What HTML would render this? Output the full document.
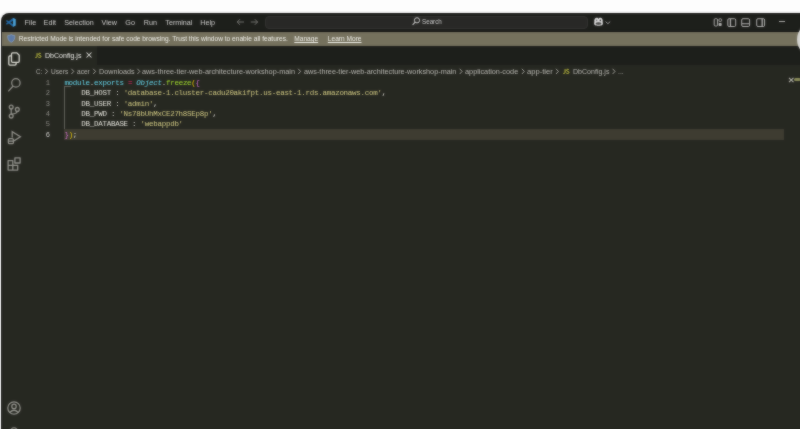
<!DOCTYPE html>
<html><head><meta charset="utf-8">
<style>
html,body{margin:0;padding:0}
body{width:800px;height:429px;overflow:hidden;position:relative;background:#fdfdfd;font-family:"Liberation Sans",sans-serif}
#wrap{position:absolute;left:0;top:0;width:800px;height:429px;will-change:transform}
#wrap2{position:absolute;left:0;top:0;width:800px;height:429px;filter:blur(1px);opacity:0.55}
.a{position:absolute}
.t{white-space:nowrap;line-height:1}
.code{font-family:"Liberation Mono",monospace;font-size:7.5px;letter-spacing:-0.27px;white-space:pre;line-height:10.35px;color:#e6e6de}
.ln{font-family:"Liberation Mono",monospace;font-size:7.05px;line-height:10.35px;color:#90908a;text-align:right;width:20px}
svg{position:absolute;overflow:visible}
</style></head><body><div id="wrap">
<div class="a" style="left:-20px;top:-20px;width:840px;height:470px;background:#fdfdfd"></div>
<div class="a" style="left:1px;top:12.6px;width:830px;height:440px;background:#121211;border-top-left-radius:8px"></div>
<div class="a" style="left:1.6px;top:14.1px;width:830px;height:17.4px;background:#1e1f1c;border-top-left-radius:7px"></div>
<div class="a" style="left:2px;top:31.5px;width:830px;height:14px;background:#75715e"></div>
<div class="a" style="left:2px;top:45.5px;width:830px;height:19.5px;background:#1e1f1c"></div>
<div class="a" style="left:2px;top:65px;width:830px;height:400px;background:#272822"></div>
<div class="a" style="left:2px;top:45.5px;width:95px;height:20px;background:#272822"></div>
<svg style="left:5.8px;top:17.8px" width="9.6" height="8.8" viewBox="0 0 24 24" preserveAspectRatio="none"><path fill="#2068a6" d="M23.15 2.587L18.21.21a1.494 1.494 0 0 0-1.705.29l-9.46 8.63-4.12-3.128a.999.999 0 0 0-1.276.057L.327 7.261A1 1 0 0 0 .326 8.74L3.899 12 .326 15.26a1 1 0 0 0 .001 1.479L1.65 17.94a.999.999 0 0 0 1.276.057l4.12-3.128 9.46 8.63a1.492 1.492 0 0 0 1.704.29l4.942-2.377A1.5 1.5 0 0 0 24 20.06V3.939a1.5 1.5 0 0 0-.85-1.352zm-5.146 14.861L10.826 12l7.178-5.448v10.896z"/><path fill="#4ea6da" d="M18 0.3L23.2 2.6A1.5 1.5 0 0 1 24 3.9V20.1A1.5 1.5 0 0 1 23.2 21.4L18 23.8Z"/></svg>
<div class="a t" style="left:24.6px;top:18.6px;font-size:7.2px;color:#d4d4d2;">File</div>
<div class="a t" style="left:43.6px;top:18.6px;font-size:7.2px;color:#d4d4d2;">Edit</div>
<div class="a t" style="left:64.3px;top:18.6px;font-size:7.2px;color:#d4d4d2;">Selection</div>
<div class="a t" style="left:101.6px;top:18.6px;font-size:7.2px;color:#d4d4d2;">View</div>
<div class="a t" style="left:125.3px;top:18.6px;font-size:7.2px;color:#d4d4d2;">Go</div>
<div class="a t" style="left:143.8px;top:18.6px;font-size:7.2px;color:#d4d4d2;">Run</div>
<div class="a t" style="left:165.3px;top:18.6px;font-size:7.2px;color:#d4d4d2;">Terminal</div>
<div class="a t" style="left:200.3px;top:18.6px;font-size:7.2px;color:#d4d4d2;">Help</div>
<svg style="left:235.5px;top:18px" width="9" height="8" viewBox="0 0 9 8"><path d="M8 4H1.2M4 1.2L1.2 4 4 6.8" fill="none" stroke="#7e7e7b" stroke-width="0.9"/></svg>
<svg style="left:249.5px;top:18px" width="9" height="8" viewBox="0 0 9 8"><path d="M0.8 4H7.6M4.8 1.2L7.6 4 4.8 6.8" fill="none" stroke="#7e7e7b" stroke-width="0.9"/></svg>
<div class="a" style="left:265px;top:15.5px;width:321px;height:11.5px;border:1px solid #343432;background:#292927;border-radius:4px"></div>
<svg style="left:411px;top:16px" width="10" height="10" viewBox="0 0 10 10"><circle cx="6" cy="4.3" r="2.6" fill="none" stroke="#cfcfcf" stroke-width="1"/><path d="M4.2 6.1L1.6 8.9" stroke="#cfcfcf" stroke-width="1.1"/></svg>
<div class="a t" style="left:422.3px;top:18.3px;font-size:7.0px;color:#d0d0d0;transform:scaleX(0.8927);transform-origin:0 0;">Search</div>
<svg style="left:593px;top:17.2px" width="11" height="9.5" viewBox="0 0 11 10"><path d="M1.2 5.2C0.6 3.8 1.3 1 3.2 0.8 4.5 0.7 5.2 1.3 5.5 2 5.8 1.3 6.5 0.7 7.8 0.8 9.7 1 10.4 3.8 9.8 5.2 10.4 6 10.3 8 9 8.8 7.8 9.5 3.2 9.5 2 8.8 0.7 8 0.6 6 1.2 5.2Z" fill="#dedede"/><ellipse cx="5.5" cy="6.9" rx="3.1" ry="1.3" fill="#444442"/><ellipse cx="3.6" cy="3.6" rx="0.8" ry="1" fill="#777"/><ellipse cx="7.4" cy="3.6" rx="0.8" ry="1" fill="#333"/></svg>
<svg style="left:605px;top:20.5px" width="6" height="4" viewBox="0 0 6 4"><path d="M0.6 0.6L2.9 2.7 5.2 0.6" fill="none" stroke="#b0b0b0" stroke-width="0.9"/></svg>
<svg style="left:713px;top:18px" width="10" height="9" viewBox="0 0 10 9"><rect x="1.2" y="0.7" width="3.4" height="7.3" rx="1.1" fill="none" stroke="#b4b4b2" stroke-width="1"/><rect x="5.9" y="0.8" width="2.7" height="2.6" rx="0.8" fill="none" stroke="#b4b4b2" stroke-width="0.9"/><rect x="5.6" y="5" width="3.1" height="3" rx="0.9" fill="#b4b4b2"/></svg>
<svg style="left:727.3px;top:17.5px" width="10" height="9" viewBox="0 0 10 9"><rect x="0.8" y="0.7" width="7.9" height="7.8" rx="1.3" fill="none" stroke="#b4b4b2" stroke-width="1"/><rect x="2.8" y="1" width="1.3" height="7.2" fill="#b4b4b2"/></svg>
<svg style="left:741.4px;top:17.5px" width="10" height="9" viewBox="0 0 10 9"><rect x="0.7" y="0.7" width="7.9" height="7.8" rx="1.3" fill="none" stroke="#b4b4b2" stroke-width="1"/><rect x="1" y="5.2" width="7.3" height="1" fill="#b4b4b2"/></svg>
<svg style="left:755.6px;top:17.5px" width="10" height="9" viewBox="0 0 10 9"><rect x="0.7" y="0.7" width="7.9" height="7.8" rx="1.3" fill="none" stroke="#b4b4b2" stroke-width="1"/><rect x="5.5" y="1" width="1.3" height="7.2" fill="#b4b4b2"/></svg>
<div class="a" style="left:778.6px;top:21px;width:6.3px;height:0.9px;background:#b4b4b2"></div>
<div class="a" style="left:797.1px;top:21.5px;width:35px;height:35px;border-radius:50%;background:#d6d6d2"></div>
<svg style="left:7.3px;top:34.4px" width="8.5" height="8.8" viewBox="0 0 9 9"><path d="M4.5 0.5C5.8 1.3 7 1.6 8.3 1.6 8.4 5 7.2 7.6 4.5 8.6 1.8 7.6 0.6 5 0.7 1.6 2 1.6 3.2 1.3 4.5 0.5Z" fill="#5d7ba6" stroke="#8aa2c8" stroke-width="0.7"/></svg>
<div class="a t" style="left:18.8px;top:36.2px;font-size:6.6px;color:#f4f4ee;">Restricted Mode is intended for safe code browsing. Trust this window to enable all features.</div>
<div class="a t" style="left:294.3px;top:36.2px;font-size:6.6px;color:#f4f4ee;text-decoration:underline">Manage</div>
<div class="a t" style="left:327.8px;top:36.2px;font-size:6.6px;color:#f4f4ee;text-decoration:underline">Learn More</div>
<svg style="left:0;top:0" width="28" height="429" viewBox="0 0 28 429">
 <g fill="none" stroke="#e2e2da" stroke-width="1.3" stroke-linejoin="round">
  <path d="M11.4 55.8H9.9Q8.8 55.8 8.8 56.9V64Q8.8 65.1 9.9 65.1H15Q16.1 65.1 16.1 64V62.4"/>
  <path d="M12.6 52.9H16.9L19.2 55.3V61.2Q19.2 62.3 18.1 62.3H12.6Q11.5 62.3 11.5 61.2V54Q11.5 52.9 12.6 52.9Z"/>
 </g>
 <g fill="none" stroke="#94948e" stroke-width="1.3" stroke-linecap="round">
  <circle cx="15.9" cy="82.9" r="4.2"/>
  <path d="M12.9 86.2L8.7 90.9"/>
  <circle cx="11.2" cy="107.1" r="1.9"/>
  <circle cx="11.2" cy="116.1" r="1.9"/>
  <circle cx="17.3" cy="109.4" r="1.9"/>
  <path d="M11.2 109V114.2M17.3 111.3Q17.3 113.7 11.6 114.1"/>
  <path d="M12.2 137V131.6L20.4 136.8L14.3 140.6"/>
  <rect x="8.4" y="138.6" width="5" height="5" rx="1.2"/>
  <path d="M8.6 141.1H13.2"/>
  <path d="M8.1 160.6H12.8V170.1H8.1ZM8.1 165.3H17.7V170.1H12.8M14.9 157.8H20.1V163H14.9Z" stroke-linejoin="round"/>
  <circle cx="14" cy="408" r="6.2"/>
  <circle cx="14" cy="406.4" r="2.2"/>
  <path d="M10 412.3Q14 408.2 18 412.3"/>
  <circle cx="14" cy="431.5" r="3.6"/>
 </g>
</svg>
<svg style="left:35px;top:52.8px" width="6.4" height="4.8" viewBox="0 0 13 10"><path d="M4.2 0.3V7Q4.2 9.2 2 9.2H0.4M12.2 1.4Q11.1 0.6 9.6 0.6Q7.3 0.6 7.3 2.6Q7.3 4.2 9.7 4.8Q12.3 5.4 12.3 7.2Q12.3 9.3 9.6 9.3Q7.8 9.3 6.6 8.4" fill="none" stroke="#cbcb41" stroke-width="2"/></svg>
<div class="a t" style="left:44.8px;top:52.0px;font-size:7.2px;color:#f2f2ee;transform:scaleX(0.9798);transform-origin:0 0;">DbConfig.js</div>
<svg style="left:85.9px;top:52.2px" width="6" height="6" viewBox="0 0 6 6"><path d="M0.5 0.5L5.5 5.5M5.5 0.5L0.5 5.5" stroke="#e2e2de" stroke-width="1.05"/></svg>
<div class="a t" style="left:35.8px;top:68.2px;font-size:7.3px;color:#bcbcb6;transform:scaleX(0.8497);transform-origin:0 0;">C:</div>
<div class="a t" style="left:50.8px;top:68.2px;font-size:7.3px;color:#bcbcb6;transform:scaleX(0.9027);transform-origin:0 0;">Users</div>
<div class="a t" style="left:76.6px;top:68.2px;font-size:7.3px;color:#bcbcb6;transform:scaleX(0.9017);transform-origin:0 0;">acer</div>
<div class="a t" style="left:98.8px;top:68.2px;font-size:7.3px;color:#bcbcb6;transform:scaleX(0.9862);transform-origin:0 0;">Downloads</div>
<div class="a t" style="left:142.2px;top:68.2px;font-size:7.3px;color:#bcbcb6;transform:scaleX(1.0008);transform-origin:0 0;">aws-three-tier-web-architecture-workshop-main</div>
<div class="a t" style="left:303.8px;top:68.2px;font-size:7.3px;color:#bcbcb6;transform:scaleX(0.9969);transform-origin:0 0;">aws-three-tier-web-architecture-workshop-main</div>
<div class="a t" style="left:465.3px;top:68.2px;font-size:7.3px;color:#bcbcb6;transform:scaleX(1.0011);transform-origin:0 0;">application-code</div>
<div class="a t" style="left:526.8px;top:68.2px;font-size:7.3px;color:#bcbcb6;transform:scaleX(1.0428);transform-origin:0 0;">app-tier</div>
<div class="a t" style="left:572.8px;top:68.2px;font-size:7.3px;color:#bcbcb6;transform:scaleX(0.9651);transform-origin:0 0;">DbConfig.js</div>
<div class="a t" style="left:617.6px;top:68.2px;font-size:7.3px;color:#bcbcb6;transform:scaleX(0.9536);transform-origin:0 0;">...</div>
<svg style="left:0;top:0" width="800" height="100" viewBox="0 0 800 100"><g fill="none" stroke="#bcbcb6" stroke-width="0.85"><path d="M45.2 68.8L47.6 71.4 45.2 74"/><path d="M71.4 68.8L73.80000000000001 71.4 71.4 74"/><path d="M93.2 68.8L95.60000000000001 71.4 93.2 74"/><path d="M137.4 68.8L139.8 71.4 137.4 74"/><path d="M298.2 68.8L300.59999999999997 71.4 298.2 74"/><path d="M459.7 68.8L462.09999999999997 71.4 459.7 74"/><path d="M521.9 68.8L524.3 71.4 521.9 74"/><path d="M556 68.8L558.4 71.4 556 74"/><path d="M612.6 68.8L615.0 71.4 612.6 74"/></g></svg>
<svg style="left:563.3px;top:69.3px" width="6.4" height="4.8" viewBox="0 0 13 10"><path d="M4.2 0.3V7Q4.2 9.2 2 9.2H0.4M12.2 1.4Q11.1 0.6 9.6 0.6Q7.3 0.6 7.3 2.6Q7.3 4.2 9.7 4.8Q12.3 5.4 12.3 7.2Q12.3 9.3 9.6 9.3Q7.8 9.3 6.6 8.4" fill="none" stroke="#cbcb41" stroke-width="2"/></svg>
<div class="a" style="left:64px;top:129px;width:720.3px;height:10.7px;background:#3e3d32"></div>
<div class="a" style="left:64.2px;top:86.2px;width:0.9px;height:42.5px;background:#64645e"></div>
<div class="a" style="left:64.2px;top:86.2px;width:6.5px;height:0.8px;background:#64645e"></div>
<div class="a ln" style="left:30px;top:78px">1<br>2<br>3<br>4<br>5<br><span style="color:#d6d6d2">6</span></div>
<div class="a code" style="left:64.4px;top:78px"><span style="color:#66d9ef">module</span>.<span style="color:#66d9ef">exports</span> <span style="color:#f92672">=</span> <span style="color:#66d9ef;font-style:italic">Object</span>.<span style="color:#a6e22e">freeze</span><span style="color:#ffd700">(</span><span style="color:#da70d6">{</span>
    DB_HOST : <span style="color:#d6cf86">'database-1.cluster-cadu20akifpt.us-east-1.rds.amazonaws.com'</span>,
    DB_USER : <span style="color:#d6cf86">'admin'</span>,
    DB_PWD : <span style="color:#d6cf86">'Ns78bUhMxCE27h8SEp8p'</span>,
    DB_DATABASE : <span style="color:#d6cf86">'webappdb'</span>
<span style="color:#da70d6">}</span><span style="color:#ffd700">)</span>;</div>
<svg style="left:787.5px;top:76.8px" width="7" height="6" viewBox="0 0 7 6"><path d="M1 0.8L5.5 5.2M5.5 0.8L1 5.2" stroke="#b8b8b0" stroke-width="1.1"/></svg>
<div class="a" style="left:794px;top:77.8px;width:7px;height:3.6px;background:#8a8c5a;border-radius:2px"></div>
</div><div id="wrap2">
<div class="a" style="left:-20px;top:-20px;width:840px;height:470px;background:#fdfdfd"></div>
<div class="a" style="left:1px;top:12.6px;width:830px;height:440px;background:#121211;border-top-left-radius:8px"></div>
<div class="a" style="left:1.6px;top:14.1px;width:830px;height:17.4px;background:#1e1f1c;border-top-left-radius:7px"></div>
<div class="a" style="left:2px;top:31.5px;width:830px;height:14px;background:#75715e"></div>
<div class="a" style="left:2px;top:45.5px;width:830px;height:19.5px;background:#1e1f1c"></div>
<div class="a" style="left:2px;top:65px;width:830px;height:400px;background:#272822"></div>
<div class="a" style="left:2px;top:45.5px;width:95px;height:20px;background:#272822"></div>
<svg style="left:5.8px;top:17.8px" width="9.6" height="8.8" viewBox="0 0 24 24" preserveAspectRatio="none"><path fill="#2068a6" d="M23.15 2.587L18.21.21a1.494 1.494 0 0 0-1.705.29l-9.46 8.63-4.12-3.128a.999.999 0 0 0-1.276.057L.327 7.261A1 1 0 0 0 .326 8.74L3.899 12 .326 15.26a1 1 0 0 0 .001 1.479L1.65 17.94a.999.999 0 0 0 1.276.057l4.12-3.128 9.46 8.63a1.492 1.492 0 0 0 1.704.29l4.942-2.377A1.5 1.5 0 0 0 24 20.06V3.939a1.5 1.5 0 0 0-.85-1.352zm-5.146 14.861L10.826 12l7.178-5.448v10.896z"/><path fill="#4ea6da" d="M18 0.3L23.2 2.6A1.5 1.5 0 0 1 24 3.9V20.1A1.5 1.5 0 0 1 23.2 21.4L18 23.8Z"/></svg>
<div class="a t" style="left:24.6px;top:18.6px;font-size:7.2px;color:#d4d4d2;">File</div>
<div class="a t" style="left:43.6px;top:18.6px;font-size:7.2px;color:#d4d4d2;">Edit</div>
<div class="a t" style="left:64.3px;top:18.6px;font-size:7.2px;color:#d4d4d2;">Selection</div>
<div class="a t" style="left:101.6px;top:18.6px;font-size:7.2px;color:#d4d4d2;">View</div>
<div class="a t" style="left:125.3px;top:18.6px;font-size:7.2px;color:#d4d4d2;">Go</div>
<div class="a t" style="left:143.8px;top:18.6px;font-size:7.2px;color:#d4d4d2;">Run</div>
<div class="a t" style="left:165.3px;top:18.6px;font-size:7.2px;color:#d4d4d2;">Terminal</div>
<div class="a t" style="left:200.3px;top:18.6px;font-size:7.2px;color:#d4d4d2;">Help</div>
<svg style="left:235.5px;top:18px" width="9" height="8" viewBox="0 0 9 8"><path d="M8 4H1.2M4 1.2L1.2 4 4 6.8" fill="none" stroke="#7e7e7b" stroke-width="0.9"/></svg>
<svg style="left:249.5px;top:18px" width="9" height="8" viewBox="0 0 9 8"><path d="M0.8 4H7.6M4.8 1.2L7.6 4 4.8 6.8" fill="none" stroke="#7e7e7b" stroke-width="0.9"/></svg>
<div class="a" style="left:265px;top:15.5px;width:321px;height:11.5px;border:1px solid #343432;background:#292927;border-radius:4px"></div>
<svg style="left:411px;top:16px" width="10" height="10" viewBox="0 0 10 10"><circle cx="6" cy="4.3" r="2.6" fill="none" stroke="#cfcfcf" stroke-width="1"/><path d="M4.2 6.1L1.6 8.9" stroke="#cfcfcf" stroke-width="1.1"/></svg>
<div class="a t" style="left:422.3px;top:18.3px;font-size:7.0px;color:#d0d0d0;transform:scaleX(0.8927);transform-origin:0 0;">Search</div>
<svg style="left:593px;top:17.2px" width="11" height="9.5" viewBox="0 0 11 10"><path d="M1.2 5.2C0.6 3.8 1.3 1 3.2 0.8 4.5 0.7 5.2 1.3 5.5 2 5.8 1.3 6.5 0.7 7.8 0.8 9.7 1 10.4 3.8 9.8 5.2 10.4 6 10.3 8 9 8.8 7.8 9.5 3.2 9.5 2 8.8 0.7 8 0.6 6 1.2 5.2Z" fill="#dedede"/><ellipse cx="5.5" cy="6.9" rx="3.1" ry="1.3" fill="#444442"/><ellipse cx="3.6" cy="3.6" rx="0.8" ry="1" fill="#777"/><ellipse cx="7.4" cy="3.6" rx="0.8" ry="1" fill="#333"/></svg>
<svg style="left:605px;top:20.5px" width="6" height="4" viewBox="0 0 6 4"><path d="M0.6 0.6L2.9 2.7 5.2 0.6" fill="none" stroke="#b0b0b0" stroke-width="0.9"/></svg>
<svg style="left:713px;top:18px" width="10" height="9" viewBox="0 0 10 9"><rect x="1.2" y="0.7" width="3.4" height="7.3" rx="1.1" fill="none" stroke="#b4b4b2" stroke-width="1"/><rect x="5.9" y="0.8" width="2.7" height="2.6" rx="0.8" fill="none" stroke="#b4b4b2" stroke-width="0.9"/><rect x="5.6" y="5" width="3.1" height="3" rx="0.9" fill="#b4b4b2"/></svg>
<svg style="left:727.3px;top:17.5px" width="10" height="9" viewBox="0 0 10 9"><rect x="0.8" y="0.7" width="7.9" height="7.8" rx="1.3" fill="none" stroke="#b4b4b2" stroke-width="1"/><rect x="2.8" y="1" width="1.3" height="7.2" fill="#b4b4b2"/></svg>
<svg style="left:741.4px;top:17.5px" width="10" height="9" viewBox="0 0 10 9"><rect x="0.7" y="0.7" width="7.9" height="7.8" rx="1.3" fill="none" stroke="#b4b4b2" stroke-width="1"/><rect x="1" y="5.2" width="7.3" height="1" fill="#b4b4b2"/></svg>
<svg style="left:755.6px;top:17.5px" width="10" height="9" viewBox="0 0 10 9"><rect x="0.7" y="0.7" width="7.9" height="7.8" rx="1.3" fill="none" stroke="#b4b4b2" stroke-width="1"/><rect x="5.5" y="1" width="1.3" height="7.2" fill="#b4b4b2"/></svg>
<div class="a" style="left:778.6px;top:21px;width:6.3px;height:0.9px;background:#b4b4b2"></div>
<div class="a" style="left:797.1px;top:21.5px;width:35px;height:35px;border-radius:50%;background:#d6d6d2"></div>
<svg style="left:7.3px;top:34.4px" width="8.5" height="8.8" viewBox="0 0 9 9"><path d="M4.5 0.5C5.8 1.3 7 1.6 8.3 1.6 8.4 5 7.2 7.6 4.5 8.6 1.8 7.6 0.6 5 0.7 1.6 2 1.6 3.2 1.3 4.5 0.5Z" fill="#5d7ba6" stroke="#8aa2c8" stroke-width="0.7"/></svg>
<div class="a t" style="left:18.8px;top:36.2px;font-size:6.6px;color:#f4f4ee;">Restricted Mode is intended for safe code browsing. Trust this window to enable all features.</div>
<div class="a t" style="left:294.3px;top:36.2px;font-size:6.6px;color:#f4f4ee;text-decoration:underline">Manage</div>
<div class="a t" style="left:327.8px;top:36.2px;font-size:6.6px;color:#f4f4ee;text-decoration:underline">Learn More</div>
<svg style="left:0;top:0" width="28" height="429" viewBox="0 0 28 429">
 <g fill="none" stroke="#e2e2da" stroke-width="1.3" stroke-linejoin="round">
  <path d="M11.4 55.8H9.9Q8.8 55.8 8.8 56.9V64Q8.8 65.1 9.9 65.1H15Q16.1 65.1 16.1 64V62.4"/>
  <path d="M12.6 52.9H16.9L19.2 55.3V61.2Q19.2 62.3 18.1 62.3H12.6Q11.5 62.3 11.5 61.2V54Q11.5 52.9 12.6 52.9Z"/>
 </g>
 <g fill="none" stroke="#94948e" stroke-width="1.3" stroke-linecap="round">
  <circle cx="15.9" cy="82.9" r="4.2"/>
  <path d="M12.9 86.2L8.7 90.9"/>
  <circle cx="11.2" cy="107.1" r="1.9"/>
  <circle cx="11.2" cy="116.1" r="1.9"/>
  <circle cx="17.3" cy="109.4" r="1.9"/>
  <path d="M11.2 109V114.2M17.3 111.3Q17.3 113.7 11.6 114.1"/>
  <path d="M12.2 137V131.6L20.4 136.8L14.3 140.6"/>
  <rect x="8.4" y="138.6" width="5" height="5" rx="1.2"/>
  <path d="M8.6 141.1H13.2"/>
  <path d="M8.1 160.6H12.8V170.1H8.1ZM8.1 165.3H17.7V170.1H12.8M14.9 157.8H20.1V163H14.9Z" stroke-linejoin="round"/>
  <circle cx="14" cy="408" r="6.2"/>
  <circle cx="14" cy="406.4" r="2.2"/>
  <path d="M10 412.3Q14 408.2 18 412.3"/>
  <circle cx="14" cy="431.5" r="3.6"/>
 </g>
</svg>
<svg style="left:35px;top:52.8px" width="6.4" height="4.8" viewBox="0 0 13 10"><path d="M4.2 0.3V7Q4.2 9.2 2 9.2H0.4M12.2 1.4Q11.1 0.6 9.6 0.6Q7.3 0.6 7.3 2.6Q7.3 4.2 9.7 4.8Q12.3 5.4 12.3 7.2Q12.3 9.3 9.6 9.3Q7.8 9.3 6.6 8.4" fill="none" stroke="#cbcb41" stroke-width="2"/></svg>
<div class="a t" style="left:44.8px;top:52.0px;font-size:7.2px;color:#f2f2ee;transform:scaleX(0.9798);transform-origin:0 0;">DbConfig.js</div>
<svg style="left:85.9px;top:52.2px" width="6" height="6" viewBox="0 0 6 6"><path d="M0.5 0.5L5.5 5.5M5.5 0.5L0.5 5.5" stroke="#e2e2de" stroke-width="1.05"/></svg>
<div class="a t" style="left:35.8px;top:68.2px;font-size:7.3px;color:#bcbcb6;transform:scaleX(0.8497);transform-origin:0 0;">C:</div>
<div class="a t" style="left:50.8px;top:68.2px;font-size:7.3px;color:#bcbcb6;transform:scaleX(0.9027);transform-origin:0 0;">Users</div>
<div class="a t" style="left:76.6px;top:68.2px;font-size:7.3px;color:#bcbcb6;transform:scaleX(0.9017);transform-origin:0 0;">acer</div>
<div class="a t" style="left:98.8px;top:68.2px;font-size:7.3px;color:#bcbcb6;transform:scaleX(0.9862);transform-origin:0 0;">Downloads</div>
<div class="a t" style="left:142.2px;top:68.2px;font-size:7.3px;color:#bcbcb6;transform:scaleX(1.0008);transform-origin:0 0;">aws-three-tier-web-architecture-workshop-main</div>
<div class="a t" style="left:303.8px;top:68.2px;font-size:7.3px;color:#bcbcb6;transform:scaleX(0.9969);transform-origin:0 0;">aws-three-tier-web-architecture-workshop-main</div>
<div class="a t" style="left:465.3px;top:68.2px;font-size:7.3px;color:#bcbcb6;transform:scaleX(1.0011);transform-origin:0 0;">application-code</div>
<div class="a t" style="left:526.8px;top:68.2px;font-size:7.3px;color:#bcbcb6;transform:scaleX(1.0428);transform-origin:0 0;">app-tier</div>
<div class="a t" style="left:572.8px;top:68.2px;font-size:7.3px;color:#bcbcb6;transform:scaleX(0.9651);transform-origin:0 0;">DbConfig.js</div>
<div class="a t" style="left:617.6px;top:68.2px;font-size:7.3px;color:#bcbcb6;transform:scaleX(0.9536);transform-origin:0 0;">...</div>
<svg style="left:0;top:0" width="800" height="100" viewBox="0 0 800 100"><g fill="none" stroke="#bcbcb6" stroke-width="0.85"><path d="M45.2 68.8L47.6 71.4 45.2 74"/><path d="M71.4 68.8L73.80000000000001 71.4 71.4 74"/><path d="M93.2 68.8L95.60000000000001 71.4 93.2 74"/><path d="M137.4 68.8L139.8 71.4 137.4 74"/><path d="M298.2 68.8L300.59999999999997 71.4 298.2 74"/><path d="M459.7 68.8L462.09999999999997 71.4 459.7 74"/><path d="M521.9 68.8L524.3 71.4 521.9 74"/><path d="M556 68.8L558.4 71.4 556 74"/><path d="M612.6 68.8L615.0 71.4 612.6 74"/></g></svg>
<svg style="left:563.3px;top:69.3px" width="6.4" height="4.8" viewBox="0 0 13 10"><path d="M4.2 0.3V7Q4.2 9.2 2 9.2H0.4M12.2 1.4Q11.1 0.6 9.6 0.6Q7.3 0.6 7.3 2.6Q7.3 4.2 9.7 4.8Q12.3 5.4 12.3 7.2Q12.3 9.3 9.6 9.3Q7.8 9.3 6.6 8.4" fill="none" stroke="#cbcb41" stroke-width="2"/></svg>
<div class="a" style="left:64px;top:129px;width:720.3px;height:10.7px;background:#3e3d32"></div>
<div class="a" style="left:64.2px;top:86.2px;width:0.9px;height:42.5px;background:#64645e"></div>
<div class="a" style="left:64.2px;top:86.2px;width:6.5px;height:0.8px;background:#64645e"></div>
<div class="a ln" style="left:30px;top:78px">1<br>2<br>3<br>4<br>5<br><span style="color:#d6d6d2">6</span></div>
<div class="a code" style="left:64.4px;top:78px"><span style="color:#66d9ef">module</span>.<span style="color:#66d9ef">exports</span> <span style="color:#f92672">=</span> <span style="color:#66d9ef;font-style:italic">Object</span>.<span style="color:#a6e22e">freeze</span><span style="color:#ffd700">(</span><span style="color:#da70d6">{</span>
    DB_HOST : <span style="color:#d6cf86">'database-1.cluster-cadu20akifpt.us-east-1.rds.amazonaws.com'</span>,
    DB_USER : <span style="color:#d6cf86">'admin'</span>,
    DB_PWD : <span style="color:#d6cf86">'Ns78bUhMxCE27h8SEp8p'</span>,
    DB_DATABASE : <span style="color:#d6cf86">'webappdb'</span>
<span style="color:#da70d6">}</span><span style="color:#ffd700">)</span>;</div>
<svg style="left:787.5px;top:76.8px" width="7" height="6" viewBox="0 0 7 6"><path d="M1 0.8L5.5 5.2M5.5 0.8L1 5.2" stroke="#b8b8b0" stroke-width="1.1"/></svg>
<div class="a" style="left:794px;top:77.8px;width:7px;height:3.6px;background:#8a8c5a;border-radius:2px"></div>
</div></body></html>
